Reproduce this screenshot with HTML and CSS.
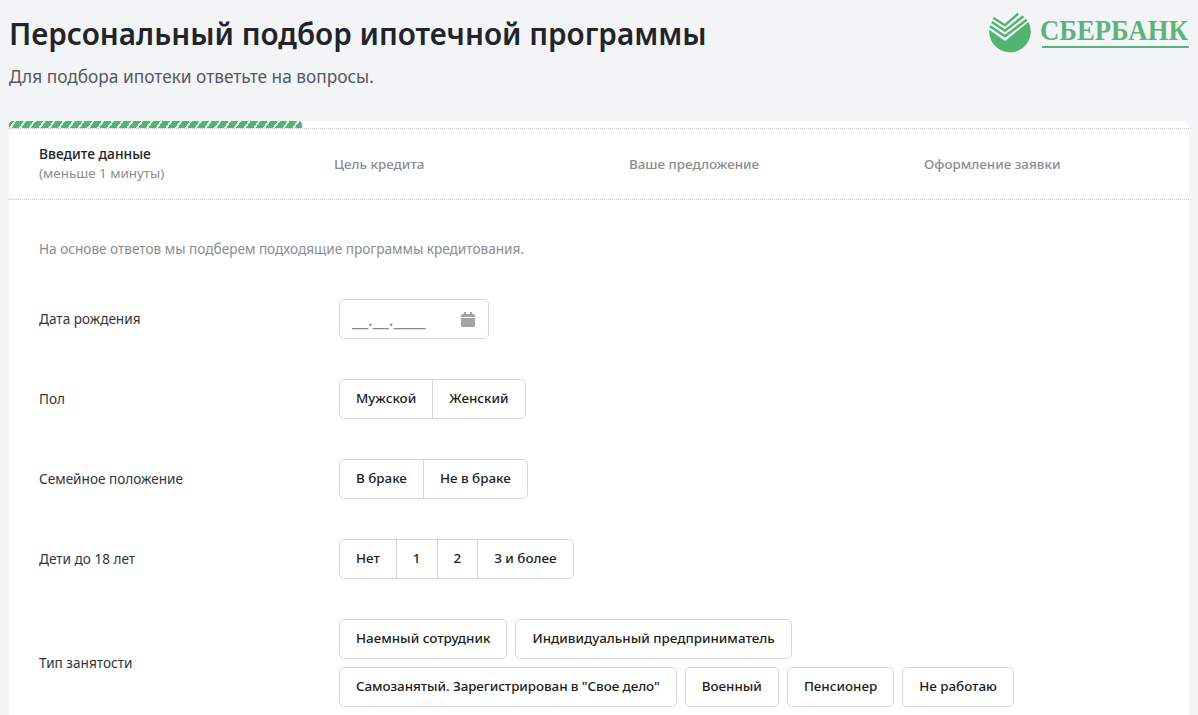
FILE: index.html
```html
<!DOCTYPE html>
<html lang="ru">
<head>
    <meta charset="UTF-8">
    <meta name="viewport" content="width=device-width, initial-scale=1.0">
    <title>Персональный подбор ипотечной программы</title>
    <link rel="stylesheet" href="styles.css">
</head>
<body>
    <header class="page-header">
        <div class="page-heading">
            <h1>Персональный подбор ипотечной программы</h1>
            <p>Для подбора ипотеки ответьте на вопросы.</p>
        </div>
        <div class="logo">
            <svg class="logo-mark" viewBox="0 0 42 40" width="42" height="40">
                <path d="M.3 17.7L16 29 39.500 10A20.800 20.800 0 1 1 .3 17.700z" fill="#53b374"/>
                <path d="M1 14.300L16 24.300 37.700 7.700" fill="none" stroke="#53b374" stroke-width="2.500"/>
                <path d="M2.700 10L16 18.700 34.300 4.300" fill="none" stroke="#53b374" stroke-width="2.500"/>
                <path d="M4.300 6L16 13.300 29.300 1.700" fill="none" stroke="#53b374" stroke-width="2.500"/>
            </svg>
            <div class="logo-text"><span>СБЕРБАНК</span></div>
        </div>
    </header>

    <main class="card">
        <div class="progress"><div class="progress-bar"></div></div>
        <ol class="steps">
            <li class="step active">Введите данные<span>(меньше 1 минуты)</span></li>
            <li class="step">Цель кредита</li>
            <li class="step">Ваше предложение</li>
            <li class="step">Оформление заявки</li>
        </ol>

        <form class="form">
            <p class="hint">На основе ответов мы подберем подходящие программы кредитования.</p>

            <div class="row">
                <label>Дата рождения</label>
                <div class="date-input">
                    <span class="mask">__.__.____</span>
                    <svg viewBox="0 0 14 15" width="14" height="15">
                        <path d="M3 0h2v2h4V0h2v2h1.500A1.500 1.500 0 0 1 14 3.500V5H0V3.500A1.500 1.500 0 0 1 1.500 2H3zM0 6h14v7.500a1.500 1.500 0 0 1-1.500 1.500h-11A1.500 1.500 0 0 1 0 13.500z" fill="#a3a3a3"/>
                    </svg>
                </div>
            </div>

            <div class="row">
                <label>Пол</label>
                <div class="btn-group">
                    <button type="button">Мужской</button>
                    <button type="button">Женский</button>
                </div>
            </div>

            <div class="row">
                <label>Семейное положение</label>
                <div class="btn-group">
                    <button type="button">В браке</button>
                    <button type="button">Не в браке</button>
                </div>
            </div>

            <div class="row">
                <label>Дети до 18 лет</label>
                <div class="btn-group">
                    <button type="button">Нет</button>
                    <button type="button">1</button>
                    <button type="button">2</button>
                    <button type="button">3 и более</button>
                </div>
            </div>

            <div class="row">
                <label>Тип занятости</label>
                <div class="btn-wrap">
                    <button type="button">Наемный сотрудник</button>
                    <button type="button">Индивидуальный предприниматель</button>
                    <button type="button" class="tight">Самозанятый. Зарегистрирован в "Свое дело"</button>
                    <button type="button">Военный</button>
                    <button type="button">Пенсионер</button>
                    <button type="button">Не работаю</button>
                </div>
            </div>
        </form>
    </main>
</body>
</html>
```

FILE: styles.css
```css
html, body {
    height: 715px;
    overflow: hidden;
}

body {
    margin: 0;
    padding: 0 9px;
    background-color: #f3f4f6;
    color: #222429;
    font-family: "Noto Sans", sans-serif;
}

.page-header {
    display: flex;
    justify-content: space-between;
    height: 121px;
}

.page-heading h1 {
    margin: 13px 0 0;
    font-size: 29.7px;
    line-height: 42px;
    font-weight: 600;
}

.page-heading p {
    margin: 10px 0 0;
    font-size: 17.3px;
    line-height: 24px;
    color: #55585e;
}

.logo {
    display: flex;
    gap: 11px;
    height: 40px;
    margin-top: 12px;
    align-items: flex-start;
}

.logo-mark {
    overflow: visible;
}

.logo-text {
    width: 147px;
    margin-top: 1px;
    border-bottom: 2px solid #5bb47d;
    color: #5bb47d;
    font-family: "Liberation Serif", serif;
    font-size: 30px;
    line-height: 33px;
    font-weight: 700;
    white-space: nowrap;
}

.logo-text span {
    display: inline-block;
    margin-left: -2px;
    transform: scaleX(0.89);
    transform-origin: left center;
}

.card {
    background-color: #fff;
    border-radius: 6px 6px 0 0;
    height: 594px;
}

.progress {
    height: 7px;
    border-bottom: 1px dotted #c4c4c4;
}

.progress-bar {
    width: 293px;
    height: 7px;
    border-radius: 4px 4px 0 0;
    background-color: #53b374;
    background-image: repeating-linear-gradient(-55deg, transparent 0 6px, #e4f3e9 6px 8px);
}

.steps {
    display: grid;
    grid-template-columns: repeat(4, 295px);
    margin: 0;
    padding: 0 0 0 30px;
    height: 70px;
    align-items: center;
    list-style: none;
    border-bottom: 1px dotted #c4c4c4;
    font-size: 13.4px;
    font-weight: 500;
    color: #8a8c90;
}

.step.active {
    color: #222429;
    font-size: 13.8px;
    line-height: 18px;
    padding-bottom: 1px;
}

.step span {
    display: block;
    margin-top: 1px;
    font-size: 13.4px;
    font-weight: 400;
    color: #8a8c90;
}

.form {
    padding: 39px 30px 0;
}

.hint {
    margin: 0 0 40px;
    font-size: 13.6px;
    line-height: 20px;
    color: #8a8c90;
}

.row {
    display: flex;
    align-items: center;
    margin-bottom: 40px;
}

.row label {
    width: 300px;
    flex-shrink: 0;
    padding-bottom: 2px;
    font-size: 13.6px;
    color: #333539;
}

button {
    height: 40px;
    padding: 0 16px 2px;
    background-color: #fff;
    border: 1px solid #d5d6d8;
    font-family: inherit;
    font-size: 13.4px;
    font-weight: 500;
    color: #1c1d20;
}

button.tight {
    letter-spacing: -0.07px;
}

.date-input {
    display: flex;
    align-items: center;
    justify-content: space-between;
    box-sizing: border-box;
    width: 150px;
    height: 40px;
    padding: 0 13px 0 12px;
    border: 1px solid #d5d6d8;
    border-radius: 5px;
}

.mask {
    font-size: 18px;
    line-height: 20px;
    color: #8a8c90;
}

.btn-group {
    display: flex;
}

.btn-group button + button {
    margin-left: -1px;
}

.btn-group button:first-child {
    border-radius: 5px 0 0 5px;
}

.btn-group button:last-child {
    border-radius: 0 5px 5px 0;
}

.btn-wrap {
    display: flex;
    flex-wrap: wrap;
    gap: 8px;
    width: 700px;
}

.btn-wrap button {
    border-radius: 5px;
}
```
